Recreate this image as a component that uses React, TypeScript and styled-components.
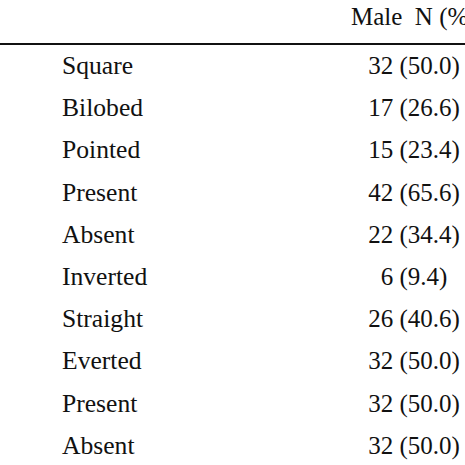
import styled, { createGlobalStyle } from "styled-components";

const GlobalStyle = createGlobalStyle`
  html, body {
    margin: 0;
    padding: 0;
    background: #ffffff;
    overflow: hidden;
  }
`;

const ROWS = [
  { label: "Square", value: "32 (50.0)" },
  { label: "Bilobed", value: "17 (26.6)" },
  { label: "Pointed", value: "15 (23.4)" },
  { label: "Present", value: "42 (65.6)" },
  { label: "Absent", value: "22 (34.4)" },
  { label: "Inverted", value: "6 (9.4)" },
  { label: "Straight", value: "26 (40.6)" },
  { label: "Everted", value: "32 (50.0)" },
  { label: "Present", value: "32 (50.0)" },
  { label: "Absent", value: "32 (50.0)" },
];

export default function App() {
  const renderRows = ROWS.map((row, index) => (
    <Row key={index}>
      <LabelCell>{row.label}</LabelCell>
      <ValueCell>{row.value}</ValueCell>
    </Row>
  ));

  return (
    <>
      <GlobalStyle />
      <Table>
        <HeaderRow>
          <HeadCell />
          <HeadCell $center>Male&nbsp;&nbsp;N (%)</HeadCell>
        </HeaderRow>
        {renderRows}
      </Table>
    </>
  );
}

const Table = styled.div`
  width: 477px;
  display: flex;
  flex-direction: column;
  font-family: "Liberation Serif", "Times New Roman", serif;
  font-size: 25px;
  color: #111111;
`;

const HeaderRow = styled.div`
  display: grid;
  grid-template-columns: 351px 126px;
  border-bottom: 2px solid #111111;
`;

const HeadCell = styled.div<{ $center?: boolean }>`
  line-height: 33px;
  padding-bottom: 10px;
  padding-right: ${({ $center }) => ($center ? "6px" : "0")};
  white-space: nowrap;
  text-align: ${({ $center }) => ($center ? "center" : "left")};
`;

const Row = styled.div`
  display: grid;
  grid-template-columns: 351px 126px;
  line-height: 42.2px;
`;

const LabelCell = styled.div`
  padding-left: 62px;
  font-size: 25.6px;
  white-space: nowrap;
`;

const ValueCell = styled.div`
  text-align: center;
  white-space: nowrap;
`;
